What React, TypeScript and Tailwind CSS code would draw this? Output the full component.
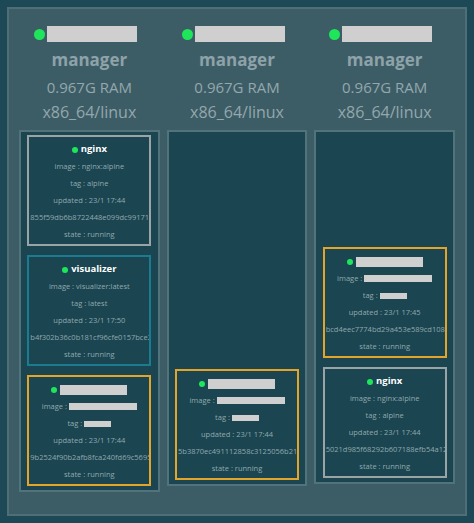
import type { ReactNode } from 'react'

type Svc = {
  name?: string
  image?: string
  tag?: string
  updated: string
  hash: string
  border: string
}

const cols: { height: string; services: Svc[] }[] = [
  {
    height: 'h-[362px]',
    services: [
      { name: 'nginx', image: 'nginx:alpine', tag: 'alpine', updated: '23/1 17:44', hash: '855f59db6b8722448e099dc991714a', border: 'border-[#9aa4a4]' },
      { name: 'visualizer', image: 'visualizer:latest', tag: 'latest', updated: '23/1 17:50', hash: 'b4f302b36c0b181cf96cfe0157bce24', border: 'border-[#1b7b90]' },
      { updated: '23/1 17:44', hash: '9b2524f90b2afb8fca240fd69c56954', border: 'border-[#e2a52a]' },
    ],
  },
  {
    height: 'h-[356px]',
    services: [{ updated: '23/1 17:44', hash: '5b3870ec491112858c3125056b212c', border: 'border-[#e2a52a]' }],
  },
  {
    height: 'h-[354px]',
    services: [
      { updated: '23/1 17:45', hash: 'bcd4eec7774bd29a453e589cd10848', border: 'border-[#e2a52a]' },
      { name: 'nginx', image: 'nginx:alpine', tag: 'alpine', updated: '23/1 17:44', hash: '5021d985f68292b607188efb54a122', border: 'border-[#9aa4a4]' },
    ],
  },
]

function Bar({ className }: { className: string }) {
  return <span className={`inline-block bg-[#cfcfcf] ${className}`} />
}

function Line({ children }: { children: ReactNode }) {
  return <div className="flex items-center justify-center whitespace-nowrap h-[17px]">{children}</div>
}

function Card({ s }: { s: Svc }) {
  return (
    <div className={`w-[124px] border-2 ${s.border} bg-[#1a4551] pt-[4px] pb-[1px] overflow-hidden text-[7.5px] text-[#92a9ae]`}>
      <Line>
        <span className="w-[6px] h-[6px] rounded-full bg-[#1ee65a] mr-[3px]" />
        {s.name ? (
          <span className="text-white font-bold text-[9.5px]">{s.name}</span>
        ) : (
          <Bar className="w-[67px] h-[10px]" />
        )}
      </Line>
      <Line>
        image :&nbsp;
        {s.image ? s.image : <Bar className="w-[68px] h-[7px]" />}
      </Line>
      <Line>
        tag :&nbsp;
        {s.tag ? s.tag : <Bar className="w-[27px] h-[6px]" />}
      </Line>
      <Line>updated : {s.updated}</Line>
      <div className="h-[17px] flex items-center whitespace-nowrap overflow-hidden pl-[1px]">
        <span className="shrink-0">{s.hash}</span>
      </div>
      <Line>state : running</Line>
    </div>
  )
}

export default function App() {
  return (
    <div
      className="w-[474px] h-[523px] bg-[#1c4955] p-[7px]"
      style={{ fontFamily: '"Open Sans", "Noto Sans", sans-serif' }}
    >
      <div className="h-[509px] border-2 border-[#4e6f78] bg-[#3d5d66] flex gap-[7px] px-[10px]">
        {cols.map((c, i) => (
          <div key={i} className="w-[141px] flex flex-col items-center">
            <div className="flex items-center mt-[17px] h-[16px] mr-[8px]">
              <span className="w-[11px] h-[11px] rounded-full bg-[#1ee65a] mr-[2px]" />
              <Bar className="w-[90px] h-[16px]" />
            </div>
            <div className="mt-[6px] text-[17px] leading-[24px] font-bold text-[#8ea2a9]">manager</div>
            <div className="mt-[3px] text-[15px] leading-[24px] text-[#93a7ad]">0.967G RAM</div>
            <div className="mt-[1px] text-[16px] leading-[24px] text-[#93a7ad]">x86_64/linux</div>
            <div
              className={`mt-[6px] w-full ${c.height} border-2 border-[#52737c] bg-[#1a4551] flex flex-col justify-end items-center gap-[9px] pb-[4px]`}
            >
              {c.services.map((s, j) => (
                <Card key={j} s={s} />
              ))}
            </div>
          </div>
        ))}
      </div>
    </div>
  )
}
